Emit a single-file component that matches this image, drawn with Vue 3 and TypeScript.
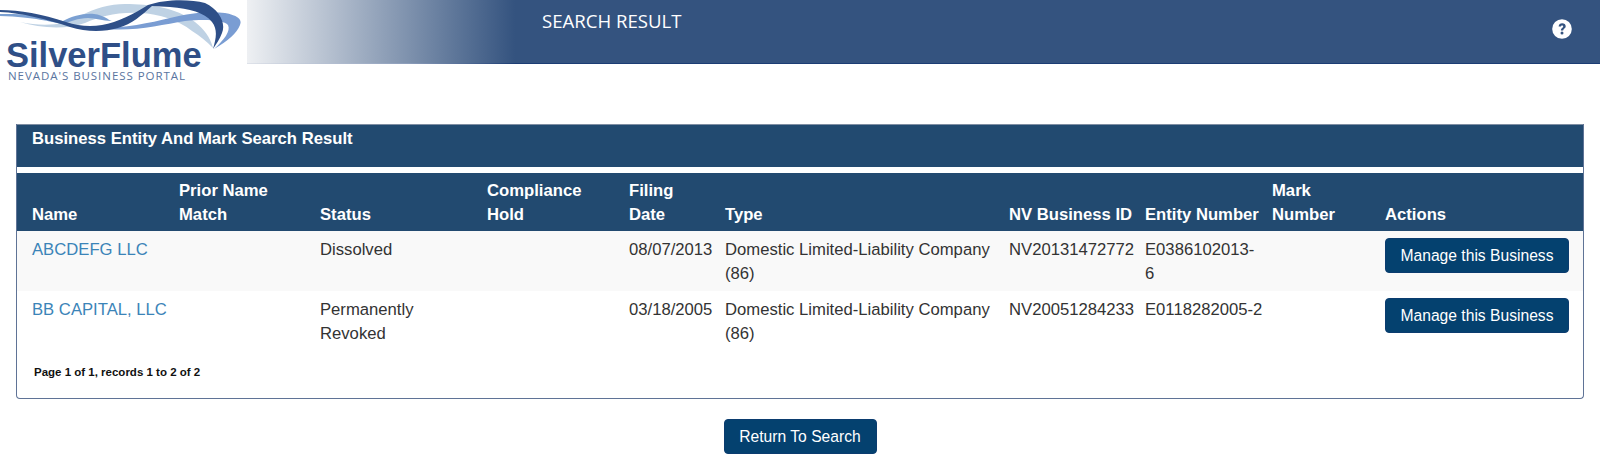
<script setup lang="ts">
interface Row {
  name: string
  status: string
  filed: string
  type: string
  nvId: string
  entity: string
}

const columns: { label: string; cls: string }[] = [
  { label: 'Name', cls: 'c-name' },
  { label: 'Prior Name Match', cls: 'c-prior' },
  { label: 'Status', cls: 'c-status' },
  { label: 'Compliance Hold', cls: 'c-hold' },
  { label: 'Filing Date', cls: 'c-date' },
  { label: 'Type', cls: 'c-type' },
  { label: 'NV Business ID', cls: 'c-id' },
  { label: 'Entity Number', cls: 'c-entity' },
  { label: 'Mark Number', cls: 'c-mark' },
  { label: 'Actions', cls: 'c-actions' },
]

const rows: Row[] = [
  {
    name: 'ABCDEFG LLC',
    status: 'Dissolved',
    filed: '08/07/2013',
    type: 'Domestic Limited-Liability Company (86)',
    nvId: 'NV20131472772',
    entity: 'E0386102013-\n6',
  },
  {
    name: 'BB CAPITAL, LLC',
    status: 'Permanently Revoked',
    filed: '03/18/2005',
    type: 'Domestic Limited-Liability Company (86)',
    nvId: 'NV20051284233',
    entity: 'E0118282005-2',
  },
]
</script>

<template>
  <div class="page">
    <header class="topbar">
      <svg class="logo" width="247" height="84" viewBox="0 0 247 84" aria-label="SilverFlume">
        <!-- light ribbon -->
        <path d="M20 22C45 27 65 25 80 16C95 8 110 4 125 4C150 4 175 7 195 22C204 29 210 37 213 48C206 41 200 36 192 31C178 20 160 14 140 13C115 12 100 17 85 23C65 30 40 28 20 22Z" fill="#bfd2e4" />
        <!-- medium ribbon, left and right -->
        <path d="M0 14C18 14 34 14 46 17C52 19 58 21 63 21C72 16 84 13 94 14C104 15 108 20 112 21C102 21 96 18 88 18C78 18 70 22 62 24C50 22 36 17 0 16Z" fill="#7ba0d2" />
        <path d="M98 28C125 28 150 23 170 18C190 13 210 11 225 13C236 15 243 19 240 25C237 33 228 41 214 49C224 40 231 31 228 25C224 20 205 19 185 21C160 25 130 33 98 28Z" fill="#7a9dd3" />
        <!-- navy ribbon -->
        <path d="M0 10C20 10 42 14 66 22C78 26 90 27 102 25C118 22 134 14 148 5C165 -1 190 -1 205 3C220 10 226 24 222 33C220 39 216 44 213 49C216 38 218 30 212 22C204 12 190 9 170 7L152 6C142 15 132 24 118 28C104 32 86 32 70 27C46 19 22 13 0 12Z" fill="#2e4f88" />
        <text x="6" y="66.5" class="logo-name">SilverFlume</text>
        <text x="8" y="80" class="logo-sub" textLength="177">NEVADA'S BUSINESS PORTAL</text>
      </svg>
      <div class="band">
        <div class="fade"></div>
        <div class="bar">
          <div class="title">SEARCH RESULT</div>
          <svg class="help" width="20" height="20" viewBox="0 0 20 20" aria-label="Help">
            <circle cx="10" cy="10" r="9.8" fill="#fff" />
            <path d="M6.6 7.6C6.7 5.5 8.2 4.3 10.2 4.3C12.2 4.3 13.7 5.5 13.7 7.3C13.7 9.6 11.2 9.7 11.2 11.6H8.9C8.9 8.9 11.2 8.8 11.2 7.5C11.2 6.8 10.8 6.4 10.1 6.4C9.4 6.4 9 6.9 8.9 7.6Z" fill="#34537f" />
            <circle cx="10" cy="14.1" r="1.5" fill="#34537f" />
          </svg>
        </div>
      </div>
    </header>

    <main class="content">
      <section class="panel">
        <h2 class="panel-title">Business Entity And Mark Search Result</h2>
        <table class="results">
          <thead>
            <tr>
              <th v-for="col in columns" :key="col.label" :class="col.cls">{{ col.label }}</th>
            </tr>
          </thead>
          <tbody>
            <tr v-for="row in rows" :key="row.nvId">
              <td class="c-name"><a href="#" class="link">{{ row.name }}</a></td>
              <td class="c-prior"></td>
              <td class="c-status">{{ row.status }}</td>
              <td class="c-hold"></td>
              <td class="c-date">{{ row.filed }}</td>
              <td class="c-type">{{ row.type }}</td>
              <td class="c-id">{{ row.nvId }}</td>
              <td class="c-entity">{{ row.entity }}</td>
              <td class="c-mark"></td>
              <td class="c-actions"><button type="button" class="btn btn-manage">Manage this Business</button></td>
            </tr>
          </tbody>
        </table>
        <p class="pager">Page 1 of 1, records 1 to 2 of 2</p>
      </section>
      <div class="footer-actions">
        <button type="button" class="btn btn-return">Return To Search</button>
      </div>
    </main>
  </div>
</template>

<style>
html,
body {
  margin: 0;
  background: #fff;
}
</style>

<style scoped>
.page {
  width: 1600px;
  height: 474px;
  overflow: hidden;
  font-family: "Liberation Sans", Arial, sans-serif;
  color: #333;
}
.topbar {
  display: flex;
  height: 84px;
  align-items: flex-start;
}
.logo {
  flex: none;
  width: 247px;
  height: 84px;
}
.logo-name {
  font-family: "Liberation Sans", Arial, sans-serif;
  font-weight: 700;
  font-size: 34.5px;
  fill: #2f4f87;
}
.logo-sub {
  font-family: "Open Sans", sans-serif;
  font-size: 11.5px;
  fill: #5a759f;
}
.band {
  flex: 1;
  height: 64px;
  display: flex;
  align-items: flex-start;
}
.fade {
  flex: none;
  width: 268px;
  height: 64px;
  box-sizing: border-box;
  background: linear-gradient(90deg, #eef0f3 0%, #34537f 100%);
  border-bottom: 1px solid;
  border-image: linear-gradient(90deg, #dfe3ea 0%, #8c9dba 60%, #1c3d74 100%) 1;
}
.bar {
  flex: 1;
  height: 64px;
  box-sizing: border-box;
  display: flex;
  align-items: flex-start;
  background: #34537f;
  border-bottom: 1px solid #1c3d74;
}
.title {
  margin: 10px 0 0 27px;
  font-family: "Open Sans", sans-serif;
  font-size: 18.6px;
  line-height: 22px;
  color: #fff;
}
.help {
  margin: 19px 28px 0 auto;
}
.content {
  margin-top: 40px;
  padding: 0 16px;
}
.panel {
  height: 275px;
  box-sizing: border-box;
  border: 1px solid #5f7396;
  border-top: 0;
  border-radius: 0 0 4px 4px;
}
.panel-title {
  margin: 0;
  height: 43px;
  box-sizing: border-box;
  padding: 5px 15px 0;
  background: #224a70;
  border-top: 1px solid #7f8ea3;
  color: #fff;
  font-size: 16.67px;
  line-height: 18px;
  font-weight: 700;
}
.results {
  width: 100%;
  margin-top: 6px;
  border-collapse: collapse;
  table-layout: fixed;
  font-size: 16.67px;
  line-height: 23.5px;
}
th {
  height: 58px;
  box-sizing: border-box;
  padding: 6px 12px 5px 0;
  background: #224a70;
  color: #fff;
  font-weight: 700;
  text-align: left;
  vertical-align: bottom;
}
td {
  height: 60px;
  padding: 7px 4px 5px 0;
  vertical-align: top;
  box-sizing: border-box;
}
tbody tr:first-child {
  background: #f9f9f9;
}
.c-name {
  width: 162px;
  padding-left: 15px;
}
.c-prior {
  width: 141px;
}
.c-status {
  width: 167px;
  padding-right: 12px;
}
.c-hold {
  width: 142px;
}
.c-date {
  width: 96px;
}
.c-type {
  width: 284px;
}
.c-id {
  width: 136px;
}
.c-entity {
  width: 127px;
  white-space: pre-line;
}
.c-mark {
  width: 113px;
}
.link {
  color: #3b84b8;
  text-decoration: none;
}
.btn {
  display: block;
  box-sizing: border-box;
  height: 35px;
  padding: 0;
  border: 1px solid #0b3c6f;
  border-radius: 4px;
  background: #04416f;
  color: #fff;
  font-family: "Liberation Sans", Arial, sans-serif;
  font-size: 15.65px;
}
.btn-manage {
  width: 184px;
}
.btn-return {
  width: 153px;
}
.pager {
  margin: 0;
  padding: 14px 17px 0;
  font-size: 11.5px;
  line-height: 14px;
  font-weight: 700;
  color: #111;
}
.footer-actions {
  display: flex;
  justify-content: center;
  margin-top: 20px;
}
</style>
